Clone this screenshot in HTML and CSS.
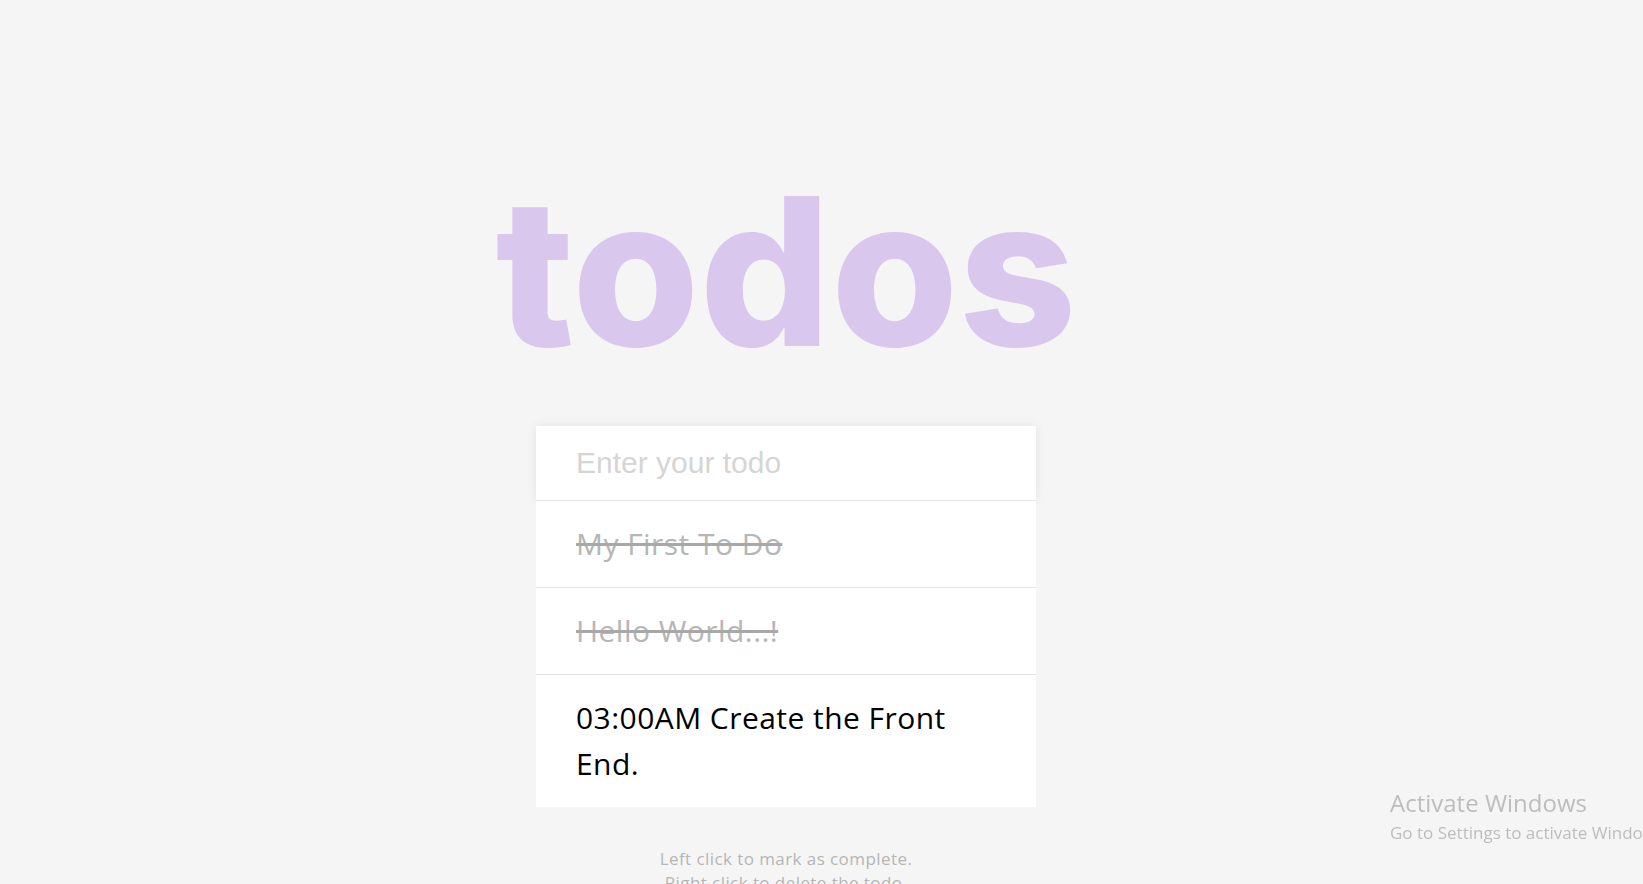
FILE: index.html
```html
<!DOCTYPE html>
<html lang="en">
<head>
    <meta charset="UTF-8">
    <meta name="viewport" content="width=device-width, initial-scale=1.0">
    <title>Todos</title>
    <link rel="stylesheet" href="styles.css">
</head>
<body>

    <main class="app">
        <h1 class="title">todos</h1>

        <form class="todo-form" id="todo-form">
            <input type="text" class="todo-input" id="todo-input" placeholder="Enter your todo" autocomplete="off">
            <ul class="todo-list" id="todo-list">
                <li class="todo-item completed">My First To Do</li>
                <li class="todo-item completed">Hello World...!</li>
                <li class="todo-item">03:00AM Create the Front End.</li>
            </ul>
        </form>

        <small class="hint">Left click to mark as complete.<br>Right click to delete the todo.</small>
    </main>

    <div class="activate">
        <p class="activate-title">Activate Windows</p>
        <p class="activate-text">Go to Settings to activate Windows.</p>
    </div>

</body>
</html>
```

FILE: styles.css
```css
html, body {
    overflow: hidden;
}

body {
    font-family: "Open Sans", "Noto Sans", sans-serif;
    background-color: #f5f5f5;
    margin: 0;
    height: 100vh;
}

.app {
    width: 1572px;
    display: flex;
    flex-direction: column;
    align-items: center;
    padding-top: 168px;
}

.title {
    font-family: Inter, "Open Sans", sans-serif;
    font-weight: 800;
    font-size: 206px;
    line-height: 1;
    letter-spacing: 0;
    color: rgb(179, 131, 226);
    opacity: 0.4;
    margin: 0 0 52px;
}

.todo-form {
    width: 500px;
    background-color: #fff;
}

.todo-input {
    display: block;
    width: 100%;
    box-sizing: border-box;
    border: none;
    padding: 20px 40px;
    font-family: "Liberation Sans", Arial, sans-serif;
    font-size: 30px;
    color: #444;
    box-shadow: 0 0 10px rgba(0, 0, 0, 0.08);
}

.todo-input::placeholder {
    color: #d5d5d5;
}

.todo-input:focus {
    outline: none;
}

.todo-list {
    list-style: none;
    margin: 0;
    padding: 0;
    background-color: #fff;
}

.todo-item {
    border-top: 1px solid #e5e5e5;
    padding: 20px 40px;
    font-size: 30px;
    line-height: 46px;
    letter-spacing: 0.015em;
    color: #000;
    cursor: pointer;
}

.todo-item.completed {
    color: #b6b6b6;
    text-decoration: line-through;
    text-decoration-color: #a8a8a8;
}

.hint {
    margin-top: 40px;
    font-size: 17px;
    line-height: 24px;
    letter-spacing: 0.025em;
    color: #b5b5b5;
    text-align: center;
}

.activate {
    position: fixed;
    left: 1390px;
    top: 787px;
    white-space: nowrap;
    color: #bdbdbd;
}

.activate p {
    margin: 0;
}

.activate-title {
    font-size: 24px;
    line-height: 32px;
}

.activate-text {
    font-size: 17px;
    line-height: 28px;
}
```
